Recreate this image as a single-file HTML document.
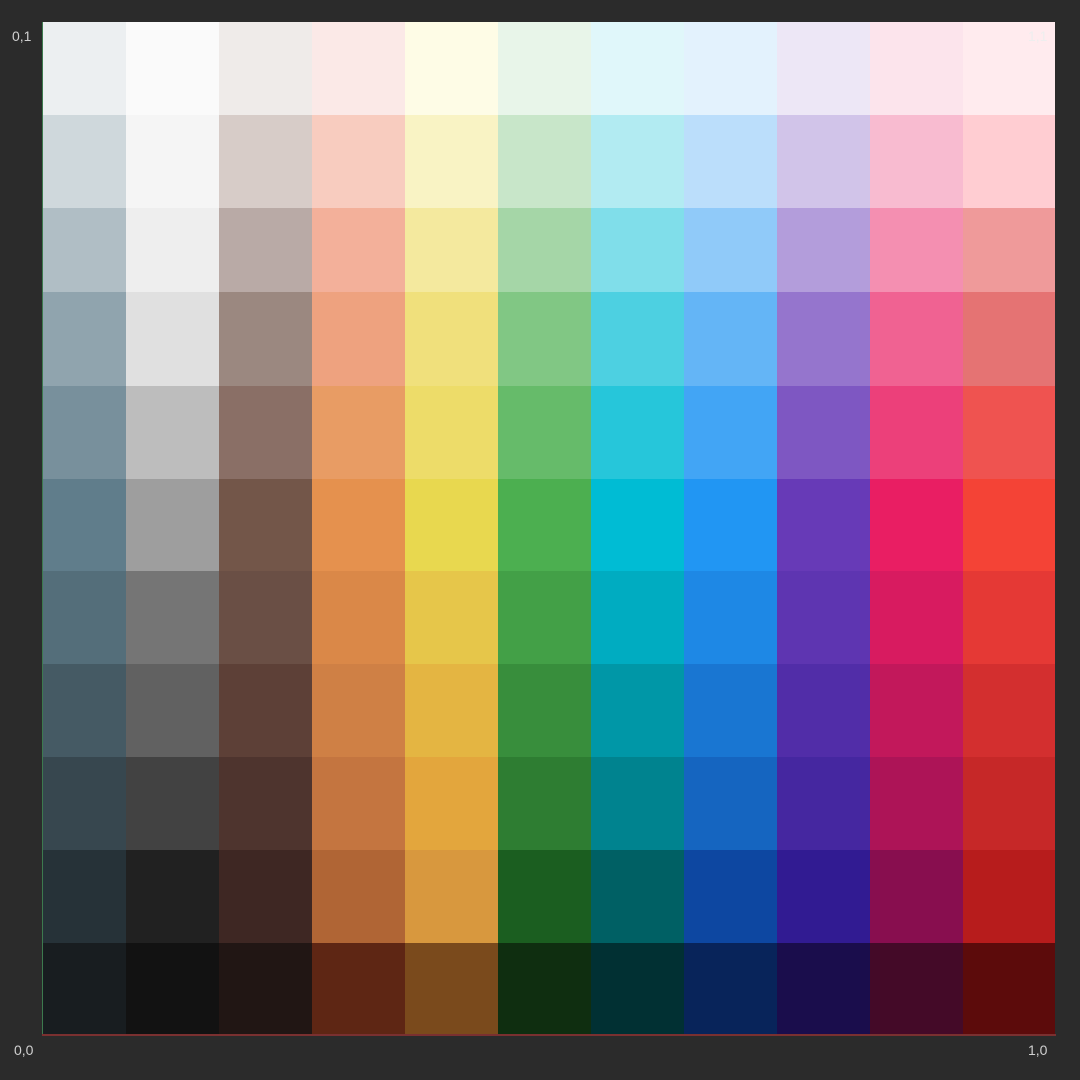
<!DOCTYPE html>
<html><head><meta charset="utf-8"><style>
body{margin:0;width:1080px;height:1080px;background:#2b2b2b;position:relative;overflow:hidden;font-family:"Liberation Sans",sans-serif}
#g{position:absolute;left:43px;top:22px;width:1012px;height:1013px;display:grid;
grid-template-columns:83px 93px 93px 93px 93px 93px 93px 93px 93px 93px 92px;
grid-template-rows:93px 93px 84px 94px 93px 92px 93px 93px 93px 93px 92px;grid-auto-flow:column}
.l{position:absolute;color:#d0d0d0;font-size:14px}
#ax1{position:absolute;left:42px;top:22px;width:1px;height:1014px;background:#3c7a4e}
#ax2{position:absolute;left:42px;top:1034px;width:1014px;height:2px;background:#7a3030}
</style></head><body>
<div id="g"></div>
<div id="ax1"></div><div id="ax2"></div>
<div class="l" style="left:12px;top:28px">0,1</div>
<div class="l" style="left:1028px;top:28px;color:#eee">1,1</div>
<div class="l" style="left:14px;top:1042px">0,0</div>
<div class="l" style="left:1028px;top:1042px">1,0</div>
<script>
var c=[
"#ECEFF1,#CFD8DC,#B0BEC5,#90A4AE,#78909C,#607D8B,#546E7A,#455A64,#37474F,#263238,#181d20",
"#FAFAFA,#F5F5F5,#EEEEEE,#E0E0E0,#BDBDBD,#9E9E9E,#757575,#616161,#424242,#212121,#121212",
"#EFEBE9,#D7CCC8,#B9AAA6,#9B8880,#8A6F66,#735649,#6A4F45,#5D4037,#4E342E,#3E2723,#211614",
"#FBE9E7,#F8CCBF,#F3B09A,#EEA27F,#E89C64,#E5914E,#DA8848,#CF8045,#C47540,#B06535,#5E2614",
"#FEFCE6,#F9F3C4,#F4E99E,#F0E07C,#EDDC69,#E8D84F,#E6C64A,#E4B542,#E3A63D,#D8983E,#7A4A1C",
"#E8F5E9,#C8E6C9,#A5D6A7,#81C784,#66BB6A,#4CAF50,#43A047,#388E3C,#2E7D32,#1B5E20,#0f2e10",
"#E0F7FA,#B2EBF2,#80DEEA,#4DD0E1,#26C6DA,#00BCD4,#00ACC1,#0097A7,#00838F,#006064,#013033",
"#E3F2FD,#BBDEFB,#90CAF9,#64B5F6,#42A5F5,#2196F3,#1E88E5,#1976D2,#1565C0,#0D47A1,#08245a",
"#EDE7F6,#D1C4E9,#B39DDB,#9575CD,#7E57C2,#673AB7,#5E35B1,#512DA8,#4527A0,#311B92,#1a0d4c",
"#FCE4EC,#F8BBD0,#F48FB1,#F06292,#EC407A,#E91E63,#D81B60,#C2185B,#AD1457,#880E4F,#440a28",
"#FFEBEE,#FFCDD2,#EF9A9A,#E57373,#EF5350,#F44336,#E53935,#D32F2F,#C62828,#B71C1C,#5c0b0b"];
var g=document.getElementById('g');
c.forEach(function(col){col.split(',').forEach(function(x){var d=document.createElement('div');d.style.background=x;g.appendChild(d);});});
</script>
</body></html>
